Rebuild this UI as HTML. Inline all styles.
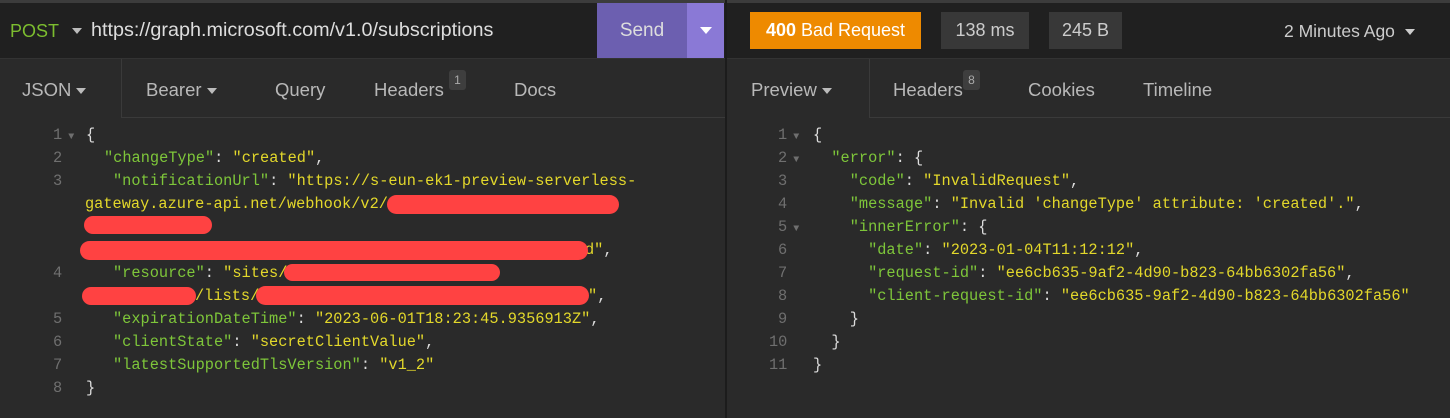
<!DOCTYPE html>
<html><head><meta charset="utf-8"><style>
*{margin:0;padding:0;box-sizing:border-box}
body{width:1450px;height:418px;background:#2a2a2a;position:relative;overflow:hidden;font-family:"Liberation Sans",sans-serif;}
.a{position:absolute;white-space:pre}
.top{position:absolute;left:0;top:0;width:1450px;height:59px;background:#202020;border-top:3px solid #3c3c3c;border-bottom:1px solid #333}
.ui{color:#b8b8b8;font-size:18.5px}
.code{font-family:"Liberation Mono",monospace;font-size:15.3px;color:#ddd;line-height:23px}
.k{color:#7ec63a}.v{color:#e3d82b}
.ln{color:#6f6f6f;font-family:"Liberation Mono",monospace;font-size:15.3px}
.r{position:absolute;background:#ff4242;border-radius:12px}
.tri{display:inline-block;width:0;height:0;border-left:5px solid transparent;border-right:5px solid transparent;border-top:6px solid #bbb;vertical-align:middle}
.badge{position:absolute;background:#3e3e3e;border-radius:3px;color:#aaa;font-size:12px;text-align:center}
</style></head><body>
<div class="top"></div>
<div class="a" style="left:10px;top:21px;color:#7cbd2f;font-size:18px">POST</div>
<div class="a" style="left:72px;top:22px"><span class="tri"></span></div>
<div class="a" style="left:91px;top:19px;color:#ddd;font-size:19.8px">https://graph.microsoft.com/v1.0/subscriptions</div>
<div class="a" style="left:597px;top:3px;width:90px;height:55px;background:#6c5fb0;color:#ddd;font-size:19px;text-align:center;line-height:55px">Send</div>
<div class="a" style="left:687px;top:3px;width:37px;height:55px;background:#8a79d6;text-align:center;line-height:55px"><span class="tri" style="border-top-color:#fff;border-left-width:6px;border-right-width:6px;border-top-width:7px"></span></div>
<div class="a" style="left:725px;top:0;width:2px;height:418px;background:#1c1c1c"></div>
<!-- left tabs -->
<div class="a" style="left:121px;top:59px;width:604px;height:59px;border-left:1px solid #3a3a3a;border-bottom:1px solid #3a3a3a"></div>
<div class="a ui" style="left:22px;top:79px">JSON <span class="tri"></span></div>
<div class="a ui" style="left:146px;top:79px">Bearer <span class="tri"></span></div>
<div class="a ui" style="left:275px;top:79px">Query</div>
<div class="a ui" style="left:374px;top:79px">Headers</div>
<div class="badge" style="left:449px;top:70px;width:17px;height:20px;line-height:20px">1</div>
<div class="a ui" style="left:514px;top:79px">Docs</div>
<!-- right top -->
<div class="a" style="left:750px;top:12px;width:171px;height:37px;background:#ee8a00;color:#fff;font-size:18px;line-height:37px;text-align:center"><b>400</b> Bad Request</div>
<div class="a" style="left:941px;top:12px;width:88px;height:37px;background:#383838;color:#ccc;font-size:18px;line-height:37px;text-align:center">138 ms</div>
<div class="a" style="left:1049px;top:12px;width:73px;height:37px;background:#383838;color:#ccc;font-size:18px;line-height:37px;text-align:center">245 B</div>
<div class="a" style="left:1284px;top:21px;color:#ccc;font-size:17.5px">2 Minutes Ago  <span class="tri" style="border-top-color:#ccc"></span></div>
<div class="a" style="left:869px;top:59px;width:581px;height:59px;border-left:1px solid #3a3a3a;border-bottom:1px solid #3a3a3a"></div>
<div class="a ui" style="left:751px;top:79px">Preview <span class="tri"></span></div>
<div class="a ui" style="left:893px;top:79px">Headers</div>
<div class="badge" style="left:963px;top:70px;width:17px;height:20px;line-height:20px">8</div>
<div class="a ui" style="left:1028px;top:79px">Cookies</div>
<div class="a ui" style="left:1143px;top:79px">Timeline</div>
<!-- left code -->
<div class="a ln" style="left:53px;top:124px;line-height:23px">1<span style="font-size:10px"> ▼</span></div>
<div class="a ln" style="left:53px;top:147px;line-height:23px">2</div>
<div class="a ln" style="left:53px;top:170px;line-height:23px">3</div>
<div class="a ln" style="left:53px;top:262px;line-height:23px">4</div>
<div class="a ln" style="left:53px;top:308px;line-height:23px">5</div>
<div class="a ln" style="left:53px;top:331px;line-height:23px">6</div>
<div class="a ln" style="left:53px;top:354px;line-height:23px">7</div>
<div class="a ln" style="left:53px;top:377px;line-height:23px">8</div>
<div class="a code" style="left:86px;top:124px">{</div>
<div class="a code" style="left:104px;top:147px"><span class="k">"changeType"</span>: <span class="v">"created"</span>,</div>
<div class="a code" style="left:113px;top:170px"><span class="k">"notificationUrl"</span>: <span class="v">"https://s-eun-ek1-preview-serverless-</span></div>
<div class="a code" style="left:85px;top:193px"><span class="v">gateway.azure-api.net/webhook/v2/</span></div>
<div class="a code" style="left:585px;top:239px"><span class="v">d"</span>,</div>
<div class="a code" style="left:113px;top:262px"><span class="k">"resource"</span>: <span class="v">"sites/</span></div>
<div class="a code" style="left:195px;top:285px"><span class="v">/lists/</span></div>
<div class="a code" style="left:588px;top:285px"><span class="v">"</span>,</div>
<div class="a code" style="left:113px;top:308px"><span class="k">"expirationDateTime"</span>: <span class="v">"2023-06-01T18:23:45.9356913Z"</span>,</div>
<div class="a code" style="left:113px;top:331px"><span class="k">"clientState"</span>: <span class="v">"secretClientValue"</span>,</div>
<div class="a code" style="left:113px;top:354px"><span class="k">"latestSupportedTlsVersion"</span>: <span class="v">"v1_2"</span></div>
<div class="a code" style="left:86px;top:377px">}</div>
<div class="r" style="left:387px;top:195px;width:232px;height:19px"></div>
<div class="r" style="left:84px;top:216px;width:128px;height:18px"></div>
<div class="r" style="left:80px;top:241px;width:508px;height:19px"></div>
<div class="r" style="left:284px;top:264px;width:216px;height:17px"></div>
<div class="r" style="left:82px;top:287px;width:114px;height:18px"></div>
<div class="r" style="left:256px;top:286px;width:333px;height:19px"></div>
<!-- right code -->
<div class="a ln" style="left:778px;top:124px;line-height:23px">1<span style="font-size:10px"> ▼</span></div>
<div class="a ln" style="left:778px;top:147px;line-height:23px">2<span style="font-size:10px"> ▼</span></div>
<div class="a ln" style="left:778px;top:170px;line-height:23px">3</div>
<div class="a ln" style="left:778px;top:193px;line-height:23px">4</div>
<div class="a ln" style="left:778px;top:216px;line-height:23px">5<span style="font-size:10px"> ▼</span></div>
<div class="a ln" style="left:778px;top:239px;line-height:23px">6</div>
<div class="a ln" style="left:778px;top:262px;line-height:23px">7</div>
<div class="a ln" style="left:778px;top:285px;line-height:23px">8</div>
<div class="a ln" style="left:778px;top:308px;line-height:23px">9</div>
<div class="a ln" style="left:769px;top:331px;line-height:23px">10</div>
<div class="a ln" style="left:769px;top:354px;line-height:23px">11</div>
<div class="a code" style="left:813px;top:124px">{
  <span class="k">"error"</span>: {
    <span class="k">"code"</span>: <span class="v">"InvalidRequest"</span>,
    <span class="k">"message"</span>: <span class="v">"Invalid 'changeType' attribute: 'created'."</span>,
    <span class="k">"innerError"</span>: {
      <span class="k">"date"</span>: <span class="v">"2023-01-04T11:12:12"</span>,
      <span class="k">"request-id"</span>: <span class="v">"ee6cb635-9af2-4d90-b823-64bb6302fa56"</span>,
      <span class="k">"client-request-id"</span>: <span class="v">"ee6cb635-9af2-4d90-b823-64bb6302fa56"</span>
    }
  }
}</div>
</body></html>
